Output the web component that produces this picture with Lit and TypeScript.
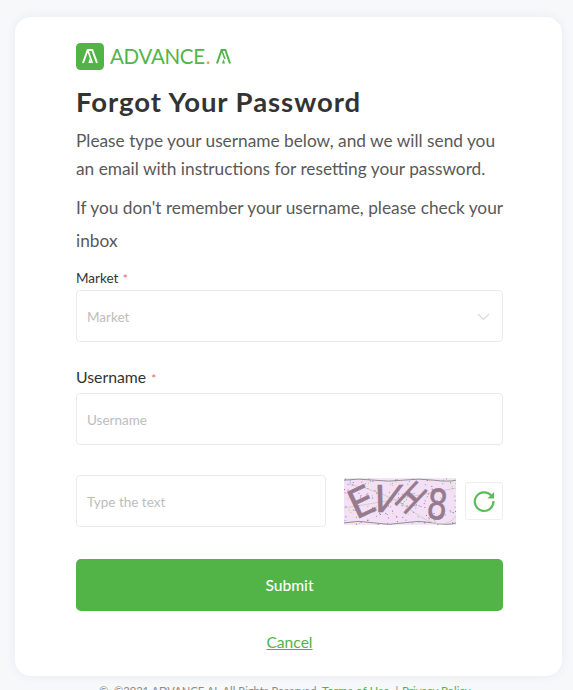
import { LitElement, html, css, svg } from "lit";
import { customElement } from "lit/decorators.js";

function dots() {
  const cols = ["#e0558a", "#58b2d8", "#e8b93f", "#6bbf6b", "#9a6fd0", "#8a6f85"];
  let seed = 17;
  const rnd = () => ((seed = (seed * 16807) % 2147483647) / 2147483647);
  const out = [];
  for (let i = 0; i < 190; i++) {
    out.push(svg`<rect x=${(rnd() * 113).toFixed(1)} y=${(rnd() * 47).toFixed(1)} width="1" height="1" fill=${cols[i % cols.length]}></rect>`);
  }
  return out;
}

@customElement("app-root")
export class AppRoot extends LitElement {
  static styles = css`
    :host {
      display: block;
      height: 690px;
      overflow: hidden;
      background: #f6f8fa;
      font-family: "Lato", "Open Sans", sans-serif;
      color: #333;
    }
    .page { display: flex; flex-direction: column; align-items: flex-start; padding: 17px 0 0 15px; }
    .card {
      box-sizing: border-box;
      width: 547px;
      height: 659px;
      flex: none;
      background: #fff;
      border-radius: 16px;
      box-shadow: 0 0 12px rgba(40, 60, 90, 0.06);
      padding: 25px 59px 0 61px;
      display: flex;
      flex-direction: column;
    }
    .logo { display: flex; align-items: center; gap: 6px; height: 28px; flex: none; }
    .word {
      font-size: 20.5px;
      line-height: 28px;
      letter-spacing: -0.3px;
      font-weight: 400;
      color: #52b548;
      display: flex;
      align-items: center;
    }
    .dot { color: #f0a13c; margin-left: 1px; }
    .word svg { margin-left: 6px; }
    h1 {
      margin: 12px 0 0;
      font-size: 27.5px;
      line-height: 40px;
      font-weight: 700;
      color: #333;
      letter-spacing: 0.95px;
      white-space: nowrap;
    }
    p { margin: 0; font-size: 17.3px; color: #595959; white-space: nowrap; }
    .p1 { margin-top: 5px; line-height: 28px; }
    .p2 { margin-top: 8px; line-height: 33px; }
    .field { display: flex; flex-direction: column; flex: none; }
    label { color: #333; }
    .market { margin-top: 11px; }
    .market label { font-size: 13.5px; line-height: 20px; margin-bottom: 1px; }
    .user { margin-top: 24px; }
    .user label { font-size: 15.8px; line-height: 22px; margin-bottom: 3px; }
    .req { color: #f5616b; font-size: 12px; margin-left: 1px; }
    .input {
      box-sizing: border-box;
      height: 52px;
      flex: none;
      border: 1px solid #e9eaec;
      border-radius: 4px;
      padding: 2px 10px 0;
      display: flex;
      align-items: center;
      justify-content: space-between;
      font-size: 13.5px;
      color: #bdbdbd;
    }
    .input svg { margin-right: 2px; }
    .cap { display: flex; align-items: center; margin-top: 30px; flex: none; }
    .cap .input { width: 250px; }
    .img { margin-left: 18px; display: block; }
    .refresh {
      box-sizing: border-box;
      width: 38px;
      height: 38px;
      margin-left: 9px;
      border: 1px solid #eeeeee;
      border-radius: 3px;
      display: flex;
      align-items: center;
      justify-content: center;
    }
    .submit {
      flex: none;
      margin-top: 32px;
      height: 52px;
      background: #52b347;
      color: #fff;
      border-radius: 5px;
      display: flex;
      align-items: center;
      justify-content: center;
      font-size: 15.6px;
      font-weight: 500;
    }
    .cancel {
      flex: none;
      margin-top: 20px;
      text-align: center;
      font-size: 15.6px;
      line-height: 22px;
      color: #52b347;
      text-decoration: underline;
    }
    .foot {
      margin: 8px 0 0 84px;
      font-size: 11.15px;
      line-height: 14px;
      color: #8b8b8b;
      white-space: nowrap;
    }
    .foot span { color: #52b347; font-size: 11.4px; }
    .foot .terms { letter-spacing: 0.25px; }
    .foot .privacy { margin-left: 1px; }
  `;

  render() {
    return html`
      <div class="page">
        <div class="card">
          <div class="logo">
            <svg width="28" height="27" viewBox="0 0 28 27">
              <rect width="28" height="27" rx="4.5" fill="#52b347"></rect>
              <path d="M7 20 L11.7 7 H16.3 L21 20" stroke="#fff" stroke-width="2" fill="none"></path>
              <path d="M11.7 7 L16.3 20" stroke="#fff" stroke-width="1.6" fill="none"></path>
              <path d="M12.4 20 L14 15 L15.2 20 Z" fill="#fff"></path>
            </svg>
            <div class="word">ADVANCE<span class="dot">.</span>
              <svg width="15" height="15" viewBox="0 0 15 15">
                <path d="M1 14.5 L5.6 1 H9.4 L14 14.5" stroke="#52b548" stroke-width="2" fill="none"></path>
                <path d="M5.6 1 L9 10" stroke="#52b548" stroke-width="1.6" fill="none"></path>
                <path d="M6 14.5 L7.5 10 L9 14.5 Z" fill="#52b548"></path>
              </svg>
            </div>
          </div>
          <h1>Forgot Your Password</h1>
          <p class="p1">Please type your username below, and we will send you<br />an email with instructions for resetting your password.</p>
          <p class="p2">If you don't remember your username, please check your<br />inbox</p>
          <div class="field market">
            <label>Market <span class="req">*</span></label>
            <div class="input">
              <span>Market</span>
              <svg width="13" height="8" viewBox="0 0 13 8"><path d="M1 1 L6.5 6.5 L12 1" stroke="#d8dade" stroke-width="1.2" fill="none"></path></svg>
            </div>
          </div>
          <div class="field user">
            <label>Username <span class="req">*</span></label>
            <div class="input"><span>Username</span></div>
          </div>
          <div class="cap">
            <div class="input"><span>Type the text</span></div>
            <svg class="img" width="113" height="47" viewBox="0 0 113 47">
              <rect width="113" height="47" fill="#f4e0f6"></rect>
              <path d="M0 2 Q15 0 30 2 T60 2 T90 2 T113 2 M0 45 Q15 42 30 45 T60 45 T90 45 T113 45" stroke="#8f8f8f" fill="none"></path>
              <path d="M4 6 Q40 12 70 34 T113 38 M0 30 Q40 24 113 10" stroke="#cfcfc8" fill="none"></path>
              ${dots()}
              <g fill="#967a8e" stroke="#967a8e" stroke-width="0.5" font-family="'DejaVu Sans', sans-serif">
                <text transform="translate(12 42) rotate(-25) scale(1.05 1.05)" font-size="38">E</text>
                <text transform="translate(24 34) skewX(-20) scale(1 0.98)" font-size="38">V</text>
                <text transform="translate(49 24) rotate(43) scale(0.72 1.15)" font-size="38">H</text>
                <text transform="translate(82 40) rotate(6) scale(0.78 1)" font-size="42">8</text>
              </g>
            </svg>
            <div class="refresh">
              <svg width="24" height="24" viewBox="0 0 24 24">
                <path d="M19.5 7 A9.3 9.3 0 1 0 21.4 12" stroke="#5cbb5c" stroke-width="2.2" fill="none"></path>
                <path d="M22 3 V9.6 H15.4 Z" fill="#5cbb5c"></path>
              </svg>
            </div>
          </div>
          <div class="submit">Submit</div>
          <div class="cancel">Cancel</div>
        </div>
        <div class="foot">©&nbsp; ©2021 ADVANCE.AI. All Rights Reserved. <span class="terms">Terms of Use</span> &nbsp;| <span class="privacy">Privacy Policy</span></div>
      </div>
    `;
  }
}
